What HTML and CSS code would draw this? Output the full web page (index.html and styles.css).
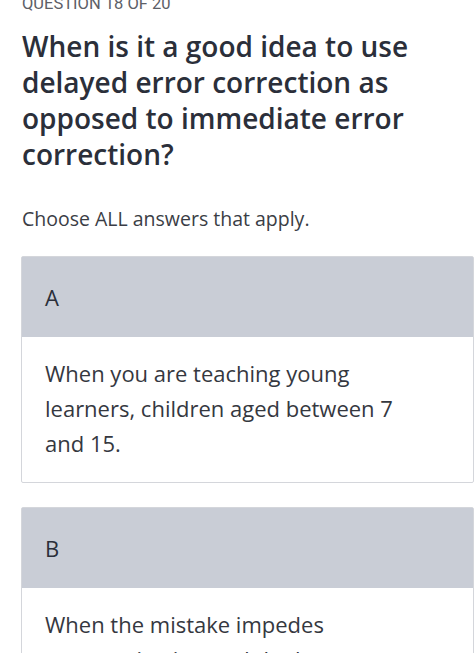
FILE: index.html
```html
<!DOCTYPE html>
<html lang="en">
<head>
<meta charset="utf-8">
<title>Question 18 of 20</title>
<link rel="stylesheet" href="styles.css">
</head>
<body>
<main class="quiz">
  <p class="counter">QUESTION 18 OF 20</p>
  <h1 class="question">When is it a good idea to use delayed error correction as opposed to immediate error correction?</h1>
  <p class="instructions">Choose ALL answers that apply.</p>
  <ul class="options">
    <li class="option">
      <div class="option-label">A</div>
      <div class="option-text">When you are teaching young learners, children aged between 7 and 15.</div>
    </li>
    <li class="option">
      <div class="option-label">B</div>
      <div class="option-text">When the mistake impedes communication and the learner cannot be understood.</div>
    </li>
  </ul>
</main>
</body>
</html>
```

FILE: styles.css
```css
html, body {
  margin: 0;
  padding: 0;
  background: #ffffff;
  overflow: hidden;
}

body {
  font-family: "Open Sans", "Liberation Sans", sans-serif;
  color: #2d313b;
}

.quiz {
  padding: 0 0 0 22px;
}

.counter {
  margin: -6px 0 0;
  font-family: Roboto, "Liberation Sans", sans-serif;
  font-size: 16.5px;
  line-height: 20px;
  color: #5d6067;
}

.question {
  margin: 14px 0 0;
  padding-right: 30px;
  font-size: 28px;
  font-weight: 600;
  line-height: 36px;
  color: #2b2f3a;
}

.instructions {
  margin: 33px 0 0;
  font-size: 19.5px;
  line-height: 28px;
  color: #3a3d45;
}

.options {
  list-style: none;
  margin: 23px 0 0 -1px;
  padding: 0;
  display: flex;
  flex-direction: column;
  gap: 24px;
}

.option {
  border: 1px solid #d4d6db;
  border-radius: 2px;
  background: #ffffff;
}

.option-label {
  height: 80px;
  display: flex;
  align-items: center;
  padding: 0 23px;
  background: #c9cdd6;
  font-size: 22px;
  color: #2b2f3a;
}

.option-text {
  padding: 19px 60px 21px 23px;
  font-size: 22px;
  line-height: 35px;
  color: #35383f;
}
```
